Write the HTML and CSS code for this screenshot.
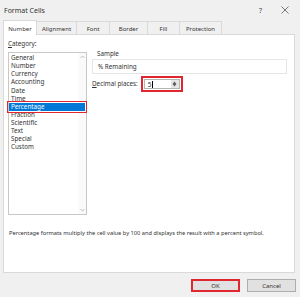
FILE: index.html
```html
<!DOCTYPE html>
<html lang="en">
<head>
  <meta charset="UTF-8" />
  <title>Format Cells</title>
  <link rel="stylesheet" href="styles.css">
</head>
<body>

  <div class="titlebar">
    <span class="judul">Format Cells</span>
    <span class="tombol-bar">
      <span class="bantu">?</span>
      <svg class="tutup" width="8" height="8" viewBox="0 0 8 8">
        <path d="M0.5 0.5 L7.5 7.5 M7.5 0.5 L0.5 7.5" stroke="#444" stroke-width="0.7" fill="none"/>
      </svg>
    </span>
  </div>

  <div class="tabs">
    <div class="tab aktif" style="width:34px">Number</div>
    <div class="tab" style="width:40px">Alignment</div>
    <div class="tab" style="width:33px">Font</div>
    <div class="tab" style="width:38px">Border</div>
    <div class="tab" style="width:32px">Fill</div>
    <div class="tab" style="width:42px">Protection</div>
  </div>

  <div class="panel">
    <div class="isi">
      <div class="kiri">
        <div class="label"><u>C</u>ategory:</div>
        <div class="listbox">
          <ul class="daftar">
            <li>General</li>
            <li>Number</li>
            <li>Currency</li>
            <li>Accounting</li>
            <li>Date</li>
            <li>Time</li>
            <li class="pilih">Percentage</li>
            <li>Fraction</li>
            <li>Scientific</li>
            <li>Text</li>
            <li>Special</li>
            <li>Custom</li>
          </ul>
          <div class="scrollbar">
            <svg width="5" height="4" viewBox="0 0 5 4"><path d="M0.5 3 L2.5 1 L4.5 3" stroke="#a8a8a8" stroke-width="0.7" fill="none"/></svg>
            <svg width="5" height="4" viewBox="0 0 5 4"><path d="M0.5 1 L2.5 3 L4.5 1" stroke="#a8a8a8" stroke-width="0.7" fill="none"/></svg>
          </div>
        </div>
      </div>

      <div class="kanan">
        <div class="label sample-label">Sample</div>
        <div class="sample-box">% Remaining</div>
        <div class="baris-desimal">
          <span class="label"><u>D</u>ecimal places:</span>
          <div class="sorot">
            <div class="spin">
              <span class="nilai">5<span class="kursor"></span></span>
              <span class="panah">
                <svg width="5" height="3" viewBox="0 0 5 3"><path d="M0.5 3 L2.5 0.5 L4.5 3 Z" fill="#606060"/></svg>
                <svg width="5" height="3" viewBox="0 0 5 3"><path d="M0.5 0 L2.5 2.5 L4.5 0 Z" fill="#606060"/></svg>
              </span>
            </div>
          </div>
        </div>
      </div>
    </div>

    <p class="keterangan">Percentage formats multiply the cell value by 100 and displays the result with a percent symbol.</p>
  </div>

  <div class="footer">
    <button class="btn btn-ok">OK</button>
    <button class="btn">Cancel</button>
  </div>

</body>
</html>
```

FILE: styles.css
```css
* {
  margin: 0;
  padding: 0;
  box-sizing: border-box;
  font-family: 'Noto Sans', 'Open Sans', sans-serif;
}

body {
  width: 300px;
  height: 297px;
  background-color: #f0f0f0;
  color: #333;
  overflow: hidden;
}

.titlebar {
  height: 20px;
  display: flex;
  align-items: center;
  justify-content: space-between;
  padding: 0 11px 0 4px;
}

.judul {
  font-size: 7px;
  color: #333;
}

.tombol-bar {
  display: flex;
  align-items: center;
  gap: 19px;
}

.bantu {
  font-size: 7px;
  color: #444;
}

.tabs {
  display: flex;
  height: 14px;
  margin-left: 3px;
  position: relative;
  z-index: 1;
}

.tab {
  font-size: 6px;
  display: flex;
  align-items: center;
  justify-content: center;
  border: 1px solid #d9d9d9;
  border-left: none;
  border-bottom: none;
  background-color: #f0f0f0;
  margin-top: 1px;
  padding-top: 1px;
  color: #333;
}

.tab.aktif {
  background-color: white;
  border-left: 1px solid #d9d9d9;
  margin-top: 0;
  height: 15px;
}

.panel {
  margin-left: 3px;
  width: 292px;
  height: 239px;
  background-color: white;
  border: 1px solid #d9d9d9;
}

.isi {
  display: flex;
  padding: 4px 4px 0 4px;
}

.label {
  font-size: 6.3px;
  line-height: 8px;
  color: #333;
}

.kiri {
  width: 80px;
}

.kiri .label {
  margin-top: 1px;
}

.listbox {
  margin-top: 4px;
  width: 79px;
  height: 163px;
  border: 1px solid #c8c8c8;
  display: flex;
}

.daftar {
  list-style: none;
  flex: 1;
  padding-top: 1px;
}

.daftar li {
  font-size: 6.3px;
  line-height: 8.12px;
  padding-left: 2px;
  color: #333;
}

.daftar li.pilih {
  position: relative;
  z-index: 1;
  margin-right: -7px;
  background-color: #0078d7;
  color: white;
  outline: 1.5px solid #e0262f;
  outline-offset: 1px;
}

.scrollbar {
  width: 8px;
  background-color: #fafafa;
  display: flex;
  flex-direction: column;
  justify-content: space-between;
  align-items: center;
  padding: 2px 0;
}

.kanan {
  flex: 1;
  padding-left: 4px;
  padding-right: 3px;
}

.sample-label {
  margin-top: 11px;
  padding-left: 5px;
}

.sample-box {
  margin-top: 1px;
  height: 15px;
  border: 1px solid #e6e6e6;
  font-size: 6.3px;
  line-height: 13px;
  padding-left: 5px;
  color: #333;
}

.baris-desimal {
  display: flex;
  align-items: center;
  margin-top: 2px;
}

.sorot {
  margin-left: 3px;
  border: 2px solid #e0262f;
  padding: 1px;
  width: 42px;
  height: 16px;
}

.spin {
  height: 100%;
  border: 1px solid #b4b4b4;
  display: flex;
  justify-content: space-between;
  align-items: center;
}

.nilai {
  font-size: 6.3px;
  padding-left: 3px;
  display: flex;
  align-items: center;
}

.kursor {
  display: inline-block;
  width: 0.6px;
  height: 7px;
  background-color: #000;
  margin-left: 1px;
}

.panah {
  width: 8px;
  height: 100%;
  background-color: #e6e6e6;
  display: flex;
  flex-direction: column;
  align-items: center;
  justify-content: space-evenly;
}

.panah svg {
  display: block;
}

.keterangan {
  margin-top: 14px;
  padding-left: 5px;
  font-size: 5.7px;
  color: #333;
}

.footer {
  display: flex;
  justify-content: flex-end;
  gap: 7px;
  padding: 6px 4px 0 0;
}

.btn {
  width: 49px;
  height: 13px;
  font-size: 6px;
  background-color: #e1e1e1;
  border: 1px solid #adadad;
  color: #333;
}

.btn-ok {
  border: 2px solid #e0262f;
}
```
